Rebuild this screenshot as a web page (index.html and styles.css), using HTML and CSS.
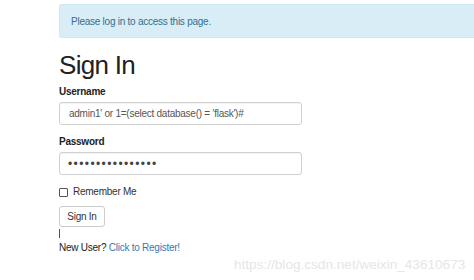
FILE: index.html
```html
<!DOCTYPE html>
<html>
<head>
<meta charset="utf-8">
<link rel="stylesheet" href="styles.css">
</head>
<body>
<div class="page">
  <div class="alert">Please log in to access this page.</div>
  <h1 class="title">Sign In</h1>
  <form class="form">
    <label class="label first">Username</label>
    <div class="input">admin1' or 1=(select database() = 'flask')#</div>
    <label class="label">Password</label>
    <div class="input dots">••••••••••••••••</div>
    <div class="check"><span class="box"></span><span>Remember Me</span></div>
    <div class="btn">Sign In</div>
    <div class="caret"></div>
    <p class="register">New User? <a class="link">Click to Register!</a></p>
  </form>
</div>
<div class="watermark">https://blog.csdn.net/weixin_43610673</div>
</body>
</html>
```
FILE: styles.css
```css
html, body { margin: 0; padding: 0; background: #fff; }
body {
  font-family: "Liberation Sans", Arial, sans-serif;
  color: #333;
  width: 474px;
  height: 280px;
  overflow: hidden;
  position: relative;
}
.page { padding: 4px 0 0 59px; }
.alert {
  background: #d9edf7;
  color: #31708f;
  font-size: 10px;
  letter-spacing: -0.25px;
  height: 34px;
  box-sizing: border-box;
  padding: 0 11px;
  display: flex;
  align-items: center;
  border-radius: 3px 0 0 3px;
  border: 1px solid #cfe8f3;
  border-right: none;
}
.title {
  margin: 13px 0 0 0;
  font-size: 26px;
  letter-spacing: -0.7px;
  font-weight: 400;
  line-height: 28px;
  color: #222;
}
.form { width: 243px; }
.label {
  display: block;
  font-size: 10px;
  letter-spacing: -0.25px;
  font-weight: bold;
  line-height: 12px;
  margin: 11px 0 4px 0;
  color: #222;
}
.label.first { margin-top: 7px; }
.input {
  height: 23px;
  box-sizing: border-box;
  border: 1px solid #d0d0d0;
  border-radius: 3px;
  padding: 0 9px;
  font-size: 10px;
  letter-spacing: -0.25px;
  display: flex;
  align-items: center;
  color: #555;
  box-shadow: inset 0 1px 1px rgba(0,0,0,.05);
}
.dots { font-size: 12px; letter-spacing: 1.4px; color: #444; padding-left: 8px; }
.check {
  display: flex;
  align-items: center;
  gap: 5px;
  font-size: 10px;
  letter-spacing: -0.25px;
  line-height: 12px;
  margin-top: 11px;
  color: #333;
}
.box {
  width: 7px; height: 7px;
  border: 1px solid #555;
  border-radius: 1px;
  display: block;
}
.btn {
  margin-top: 8px;
  display: flex;
  align-items: center;
  justify-content: center;
  width: 46px;
  height: 21px;
  box-sizing: border-box;
  border: 1px solid #ccc;
  border-radius: 3px;
  font-size: 10px;
  letter-spacing: -0.25px;
  color: #333;
  background: #fff;
}
.caret { width: 1px; height: 9px; background: #555; margin-top: 2px; }
.register { margin: 3.5px 0 0 0; font-size: 10px; letter-spacing: -0.25px; line-height: 12px; color: #222; }
.link { color: #337ab7; }
.watermark {
  position: absolute;
  left: 234px;
  top: 257px;
  font-size: 13.6px;
  line-height: 16px;
  color: #e6e6e6;
}
```
